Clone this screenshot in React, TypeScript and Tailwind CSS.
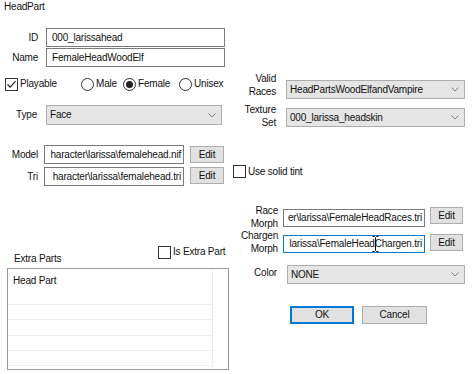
import React from 'react';

function CheckBox({ checked = false }: { checked?: boolean }) {
  return (
    <span className="w-[13px] h-[13px] border border-[#333333] bg-white flex items-center justify-center shrink-0">
      {checked && (
        <svg width="11" height="11" viewBox="0 0 11 11">
          <path d="M1.5 5.5 L4.2 8.2 L9.5 2.2" fill="none" stroke="#222222" strokeWidth="1.2" />
        </svg>
      )}
    </span>
  );
}

function Radio({ checked = false }: { checked?: boolean }) {
  return (
    <span className="w-[13px] h-[13px] rounded-full border border-[#333333] bg-white flex items-center justify-center shrink-0">
      {checked && <span className="w-[7px] h-[7px] rounded-full bg-[#222222]" />}
    </span>
  );
}

function Chevron() {
  return (
    <svg width="8" height="5" viewBox="0 0 8 5" className="shrink-0">
      <path d="M0.5 0.5 L4 4 L7.5 0.5" fill="none" stroke="#808080" strokeWidth="1" />
    </svg>
  );
}

function Combo({ value, className }: { value: string; className: string }) {
  return (
    <div className={`border border-[#adadad] bg-[#e5e5e5] flex items-center justify-between pl-[3px] pr-[5px] ${className}`}>
      <span className="whitespace-nowrap leading-[14px]">{value}</span>
      <Chevron />
    </div>
  );
}

function TextBox({
  children,
  className,
  end = false,
  focused = false,
}: {
  children: React.ReactNode;
  className: string;
  end?: boolean;
  focused?: boolean;
}) {
  return (
    <div
      className={`border bg-white flex items-center overflow-hidden ${
        focused ? 'border-[#0078d7]' : 'border-[#7a7a7a]'
      } ${end ? 'justify-end pr-[2px]' : 'pl-[5px]'} ${className}`}
    >
      <span className="whitespace-nowrap shrink-0 leading-[14px]">{children}</span>
    </div>
  );
}

function Button({ label, className }: { label: string; className: string }) {
  return (
    <div className={`bg-[#e1e1e1] flex items-center justify-center leading-[14px] shrink-0 ${className}`}>
      {label}
    </div>
  );
}

function Cursor() {
  return (
    <span className="relative inline-block w-0 h-[14px] align-middle">
      <svg width="7" height="16" viewBox="0 0 7 16" className="absolute left-[-3px] top-[-1px]">
        <path d="M0.5 0.5 H2.5 L3.5 1.5 L4.5 0.5 H6.5 M3.5 1.5 V14.5 M0.5 15.5 H2.5 L3.5 14.5 L4.5 15.5 H6.5" fill="none" stroke="#111111" strokeWidth="1" />
      </svg>
    </span>
  );
}

export default function App() {
  return (
    <div className="w-[474px] h-[374px] bg-white overflow-hidden flex text-[#111111] text-[10px] tracking-[-0.2px] font-['Liberation_Sans',Arial,sans-serif]">
      {/* left column */}
      <div className="w-[230px] flex flex-col shrink-0">
        <div className="pl-[4px] h-[14px] leading-[14px]">HeadPart</div>

        <div className="mt-[14px] flex items-center h-[19px]">
          <div className="w-[38px] text-right leading-[14px]">ID</div>
          <TextBox className="ml-[8px] w-[179px] h-[19px]">000_larissahead</TextBox>
        </div>
        <div className="mt-[1px] flex items-center h-[19px]">
          <div className="w-[38px] text-right leading-[14px]">Name</div>
          <TextBox className="ml-[8px] w-[179px] h-[19px]">FemaleHeadWoodElf</TextBox>
        </div>

        <div className="mt-[10px] flex items-center h-[14px] leading-[14px]">
          <div className="w-[81px] pl-[5px] flex items-center gap-[2px]">
            <CheckBox checked />
            <span>Playable</span>
          </div>
          <div className="w-[42px] flex items-center gap-[2px]">
            <Radio />
            <span>Male</span>
          </div>
          <div className="w-[56px] flex items-center gap-[2px]">
            <Radio checked />
            <span>Female</span>
          </div>
          <div className="flex items-center gap-[2px]">
            <Radio />
            <span>Unisex</span>
          </div>
        </div>

        <div className="mt-[14px] flex items-center h-[20px]">
          <div className="w-[37px] text-right leading-[14px]">Type</div>
          <Combo value="Face" className="ml-[9px] w-[176px] h-[20px]" />
        </div>

        <div className="mt-[20px] flex items-start h-[19px]">
          <div className="w-[38px] text-right leading-[14px] mt-[3px]">Model</div>
          <TextBox end className="ml-[6px] w-[140px] h-[19px]">
            {'haracter\\larissa\\femalehead.nif'}
          </TextBox>
          <Button label="Edit" className="ml-[6px] mt-[1px] w-[34px] h-[17px] border border-[#adadad]" />
        </div>
        <div className="mt-[3px] flex items-start h-[19px]">
          <div className="w-[38px] text-right leading-[14px] mt-[3px]">Tri</div>
          <TextBox end className="ml-[6px] w-[140px] h-[19px]">
            {'haracter\\larissa\\femalehead.tri'}
          </TextBox>
          <Button label="Edit" className="ml-[6px] w-[34px] h-[17px] border border-[#adadad]" />
        </div>

        <div className="mt-[58px] flex h-[24px]">
          <div className="w-[158px] pl-[14px] self-end mb-[2px] leading-[14px]">Extra Parts</div>
          <div className="self-start mt-[1px] flex items-center gap-[2px] leading-[14px] whitespace-nowrap">
            <CheckBox />
            <span>Is Extra Part</span>
          </div>
        </div>

        <div className="ml-[7px] w-[222px] h-[102px] border border-[#9a9a9a] bg-white flex">
          <div className="w-[205px] border-r border-[#ececec] flex flex-col mb-[2px]">
            <div className="h-[21px] pl-[5px] pt-[5px] leading-[14px]">Head Part</div>
            <div className="h-[15px] border-b border-[#f0f0f0]" />
            <div className="h-[15px] border-b border-[#f0f0f0]" />
            <div className="h-[16px] border-b border-[#f0f0f0]" />
            <div className="h-[15px] border-b border-[#f0f0f0]" />
            <div className="h-[15px] border-b border-[#f0f0f0]" />
          </div>
        </div>
      </div>

      {/* right column */}
      <div className="flex-1 flex flex-col">
        <div className="mt-[73px] flex items-start">
          <div className="w-[46px] text-right leading-[12.5px]">
            Valid
            <br />
            Races
          </div>
          <Combo value="HeadPartsWoodElfandVampire" className="ml-[10px] mt-[7px] w-[179px] h-[19px]" />
        </div>
        <div className="mt-[5px] flex items-start">
          <div className="w-[46px] text-right leading-[12.5px]">
            Texture
            <br />
            Set
          </div>
          <Combo value="000_larissa_headskin" className="ml-[10px] mt-[4px] w-[179px] h-[19px]" />
        </div>

        <div className="mt-[36px] pl-[3px] flex items-center gap-[2px] h-[13px] leading-[14px]">
          <CheckBox />
          <span>Use solid tint</span>
        </div>

        <div className="mt-[27px] flex items-start">
          <div className="w-[48px] text-right leading-[12.5px]">
            Race
            <br />
            Morph
          </div>
          <TextBox end className="ml-[5px] mt-[4px] w-[142px] h-[18px]">
            {'er\\larissa\\FemaleHeadRaces.tri'}
          </TextBox>
          <Button label="Edit" className="ml-[5px] mt-[2px] w-[33px] h-[17px] border border-[#adadad]" />
        </div>
        <div className="flex items-start">
          <div className="w-[48px] text-right leading-[12.5px]">
            Chargen
            <br />
            Morph
          </div>
          <TextBox end focused className="ml-[5px] mt-[5px] w-[142px] h-[18px]">
            {'larissa\\FemaleHead'}
            <Cursor />
            {'Chargen.tri'}
          </TextBox>
          <Button label="Edit" className="ml-[5px] mt-[4px] w-[33px] h-[17px] border border-[#adadad]" />
        </div>

        <div className="mt-[10px] flex items-start">
          <div className="w-[47px] text-right leading-[14px] mt-[1px]">Color</div>
          <Combo value="NONE" className="ml-[10px] w-[178px] h-[19px]" />
        </div>

        <div className="mt-[22px] pl-[60px] flex items-center gap-[8px]">
          <Button label="OK" className="w-[64px] h-[18px] border-2 border-[#0078d7]" />
          <Button label="Cancel" className="w-[65px] h-[18px] border border-[#adadad]" />
        </div>
      </div>
    </div>
  );
}
